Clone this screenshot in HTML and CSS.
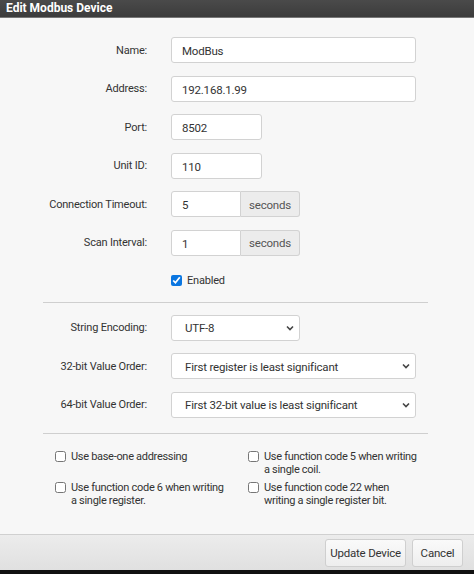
FILE: index.html
```html
<!DOCTYPE html>
<html>
<head>
<meta charset="utf-8">
<link rel="stylesheet" href="styles.css">
</head>
<body>
<div class="dialog">
  <div class="titlebar">Edit Modbus Device</div>
  <div class="content">
    <div class="form">
      <label class="lbl">Name:</label>
      <div class="field"><input class="txt wide" type="text" value="ModBus"></div>
      <label class="lbl">Address:</label>
      <div class="field"><input class="txt wide" type="text" value="192.168.1.99"></div>
      <label class="lbl">Port:</label>
      <div class="field"><input class="txt short" type="text" value="8502"></div>
      <label class="lbl">Unit ID:</label>
      <div class="field"><input class="txt short" type="text" value="110"></div>
      <label class="lbl">Connection Timeout:</label>
      <div class="field"><div class="group"><input class="txt grp" type="text" value="5"><span class="addon">seconds</span></div></div>
      <label class="lbl">Scan Interval:</label>
      <div class="field"><div class="group"><input class="txt grp" type="text" value="1"><span class="addon">seconds</span></div></div>
      <div></div>
      <div class="field check"><input type="checkbox" checked><span>Enabled</span></div>
    </div>
    <div class="rule"></div>
    <div class="form">
      <label class="lbl">String Encoding:</label>
      <div class="field"><div class="sel small">UTF-8</div></div>
      <label class="lbl">32-bit Value Order:</label>
      <div class="field"><div class="sel wide">First register is least significant</div></div>
      <label class="lbl">64-bit Value Order:</label>
      <div class="field"><div class="sel wide">First 32-bit value is least significant</div></div>
    </div>
    <div class="rule"></div>
    <div class="opts">
      <label class="opt"><input type="checkbox"><span>Use base-one addressing</span></label>
      <label class="opt"><input type="checkbox"><span>Use function code 5 when writing a single coil.</span></label>
      <label class="opt"><input type="checkbox"><span>Use function code 6 when writing a single register.</span></label>
      <label class="opt"><input type="checkbox"><span>Use function code 22 when writing a single register bit.</span></label>
    </div>
  </div>
  <div class="footer">
    <button class="btn">Update Device</button>
    <button class="btn">Cancel</button>
  </div>
  <div class="bottom"></div>
</div>
</body>
</html>
```
FILE: styles.css
```css
* { box-sizing: border-box; }
html, body { margin: 0; padding: 0; }
body {
  font-family: Roboto, "Liberation Sans", sans-serif;
  font-size: 11px;
  letter-spacing: -0.2px;
  color: #333;
  background: #222;
}
.dialog {
  width: 474px;
  height: 574px;
  display: flex;
  flex-direction: column;
  background: #f7f7f7;
}
.titlebar {
  height: 18px;
  background: linear-gradient(#4a4a4a, #3c3c3c);
  border-bottom: 1px solid #777;
  color: #fff;
  font-weight: bold;
  font-size: 12px;
  letter-spacing: 0;
  line-height: 17px;
  padding-left: 6px;
}
.content {
  flex: 1;
  padding: 19px 0 0 0;
}
.form {
  display: grid;
  grid-template-columns: 147px 1fr;
  column-gap: 24px;
  row-gap: 12.6px;
  align-items: center;
}
.lbl {
  text-align: right;
  white-space: nowrap;
}
.field { display: flex; align-items: center; }
.txt {
  height: 26px;
  border: 1px solid #d2d2d2;
  border-radius: 3px;
  background: #fff;
  font-family: inherit;
  font-size: 11.5px;
  letter-spacing: -0.2px;
  color: #333;
  padding: 2px 10px 0 10px;
  outline: none;
}
.txt.wide { width: 245px; }
.txt.short { width: 91px; }
.group { display: flex; }
.txt.grp {
  width: 70px;
  border-radius: 3px 0 0 3px;
}
.addon {
  width: 59px;
  height: 26px;
  border: 1px solid #d2d2d2;
  border-left: none;
  border-radius: 0 3px 3px 0;
  background: #ececec;
  font-size: 11.5px;
  color: #555;
  display: flex;
  align-items: center;
  justify-content: center;
  padding-top: 1px;
}
.check {
  height: 12px;
  margin-top: 6px;
}
.check input, .opt input {
  width: 11px;
  height: 11px;
  margin: 0 5px 0 0;
  accent-color: #0b76e0;
  flex: none;
}
.rule {
  height: 1px;
  background: #cfcfcf;
  margin: 15px 46px 12px 43px;
}
.sel {
  height: 26px;
  border: 1px solid #d2d2d2;
  border-radius: 3px;
  background: #fff url("data:image/svg+xml,%3Csvg xmlns='http://www.w3.org/2000/svg' width='8' height='6' viewBox='0 0 8 6'%3E%3Cpath d='M1 1.5 L4 4.5 L7 1.5' fill='none' stroke='%23444' stroke-width='1.6'/%3E%3C/svg%3E") no-repeat right 5px center;
  font-size: 11.5px;
  color: #333;
  display: flex;
  align-items: center;
  padding: 1px 0 0 13px;
}
.sel.small { width: 129px; }
.sel.wide { width: 245px; }
.opts {
  display: grid;
  grid-template-columns: 193px 170px;
  row-gap: 5px;
  padding-left: 55px;
  padding-top: 4px;
}
.opt {
  display: flex;
  align-items: flex-start;
  line-height: 13px;
  letter-spacing: -0.3px;
}
.opt input { margin-top: 1px; }
.opt span { width: 155px; }
.footer {
  height: 36px;
  background: linear-gradient(#ececec, #e0e0e0);
  border-top: 1px solid #d0d0d0;
  display: flex;
  justify-content: flex-end;
  align-items: center;
  gap: 6px;
  padding-right: 11px;
}
.btn {
  height: 28px;
  min-width: 51px;
  font-family: inherit;
  font-size: 11.5px;
  letter-spacing: -0.2px;
  color: #333;
  background: linear-gradient(#fafafa, #eeeeee);
  border: 1px solid #cfcfcf;
  border-radius: 3px;
  padding: 0 4px;
}
.bottom {
  height: 4px;
  background: #111;
}
```
